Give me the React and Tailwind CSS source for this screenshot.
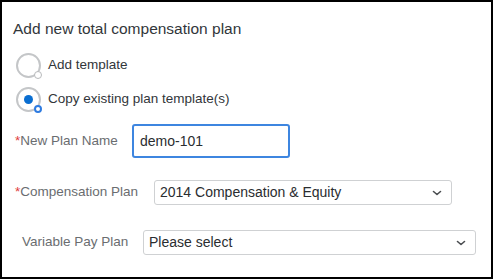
import React from "react";

function Chevron() {
  return (
    <svg width="10" height="6" viewBox="0 0 10 6" fill="none">
      <path d="M1.5 1.5 L5 4.5 L8.5 1.5" stroke="#4a4d50" strokeWidth="1.6" strokeLinecap="round" strokeLinejoin="round" />
    </svg>
  );
}

function Radio({ checked, label }) {
  return (
    <div className="flex items-center h-[26px]">
      <div className="relative w-[25px] h-[25px] shrink-0">
        <div className="absolute inset-0 rounded-full border-2 border-[#c4c6c8] bg-white flex items-center justify-center">
          {checked && <div className="w-[9px] h-[9px] rounded-full bg-[#0a6ed1]" />}
        </div>
        <div
          className={
            checked
              ? "absolute left-[18px] top-[18px] w-[8px] h-[8px] rounded-full border-2 border-[#2e7be0] bg-white"
              : "absolute left-[18px] top-[18px] w-[8px] h-[8px] rounded-full border-[1.5px] border-[#b8babc] bg-white"
          }
        />
      </div>
      <span className="ml-[7px] text-[13.5px] text-[#32363a]">{label}</span>
    </div>
  );
}

export default function App() {
  return (
    <div
      className="w-[493px] h-[279px] border-2 border-black bg-white relative overflow-hidden"
      style={{ fontFamily: '"Liberation Sans", Arial, sans-serif' }}
    >
      <div className="pl-[11px] pt-[17px]">
        <div className="text-[15.5px] leading-[20px] text-[#32363a]">Add new total compensation plan</div>
      </div>
      <div className="pl-[14px] mt-[13px] flex flex-col gap-[8px]">
        <Radio checked={false} label="Add template" />
        <Radio checked={true} label="Copy existing plan template(s)" />
      </div>
      <div className="flex items-center mt-[12px] pl-[13px]">
        <span className="text-[13.5px] text-[#6a6d70] w-[117px]">
          <span className="text-[#e03c3c]">*</span>New Plan Name
        </span>
        <div className="w-[158px] h-[34px] rounded-[3px] border-2 border-[#3e86e0] flex items-center pl-[6px] text-[14px] text-[#2a2d30]">
          demo-101
        </div>
      </div>
      <div className="flex items-center mt-[22px] pl-[13px]">
        <span className="text-[13.5px] text-[#6a6d70] w-[139px]">
          <span className="text-[#e03c3c]">*</span>Compensation Plan
        </span>
        <div className="w-[298px] h-[25px] rounded-[3px] border border-[#cfd1d3] flex items-center justify-between pl-[5px] pr-[9px] text-[14px] text-[#2a2d30]">
          <span>2014 Compensation &amp; Equity</span>
          <Chevron />
        </div>
      </div>
      <div className="flex items-center mt-[25px] pl-[20px]">
        <span className="text-[13.5px] text-[#6a6d70] w-[121px]">Variable Pay Plan</span>
        <div className="w-[333px] h-[25px] rounded-[3px] border border-[#cfd1d3] flex items-center justify-between pl-[5px] pr-[9px] text-[14px] text-[#2a2d30]">
          <span>Please select</span>
          <Chevron />
        </div>
      </div>
    </div>
  );
}
